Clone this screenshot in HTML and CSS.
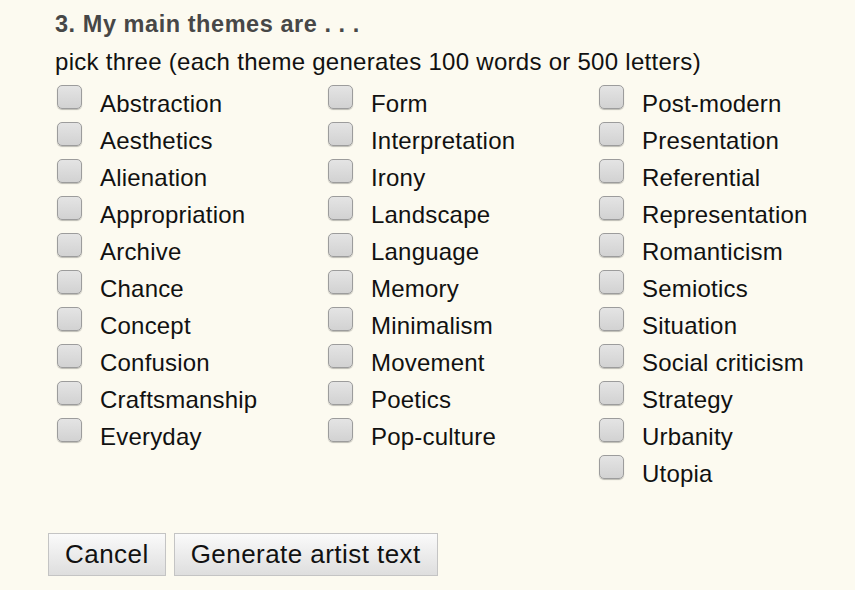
FILE: index.html
```html
<!DOCTYPE html>
<html>
<head>
<meta charset="utf-8">
<link rel="stylesheet" href="styles.css">
</head>
<body>
<div class="page">
  <h2 class="title">3. My main themes are . . .</h2>
  <p class="hint">pick three (each theme generates 100 words or 500 letters)</p>
  <div class="cols">
    <div class="col">
      <label class="item"><span class="box"></span><span>Abstraction</span></label>
      <label class="item"><span class="box"></span><span>Aesthetics</span></label>
      <label class="item"><span class="box"></span><span>Alienation</span></label>
      <label class="item"><span class="box"></span><span>Appropriation</span></label>
      <label class="item"><span class="box"></span><span>Archive</span></label>
      <label class="item"><span class="box"></span><span>Chance</span></label>
      <label class="item"><span class="box"></span><span>Concept</span></label>
      <label class="item"><span class="box"></span><span>Confusion</span></label>
      <label class="item"><span class="box"></span><span>Craftsmanship</span></label>
      <label class="item"><span class="box"></span><span>Everyday</span></label>
    </div>
    <div class="col">
      <label class="item"><span class="box"></span><span>Form</span></label>
      <label class="item"><span class="box"></span><span>Interpretation</span></label>
      <label class="item"><span class="box"></span><span>Irony</span></label>
      <label class="item"><span class="box"></span><span>Landscape</span></label>
      <label class="item"><span class="box"></span><span>Language</span></label>
      <label class="item"><span class="box"></span><span>Memory</span></label>
      <label class="item"><span class="box"></span><span>Minimalism</span></label>
      <label class="item"><span class="box"></span><span>Movement</span></label>
      <label class="item"><span class="box"></span><span>Poetics</span></label>
      <label class="item"><span class="box"></span><span>Pop-culture</span></label>
    </div>
    <div class="col">
      <label class="item"><span class="box"></span><span>Post-modern</span></label>
      <label class="item"><span class="box"></span><span>Presentation</span></label>
      <label class="item"><span class="box"></span><span>Referential</span></label>
      <label class="item"><span class="box"></span><span>Representation</span></label>
      <label class="item"><span class="box"></span><span>Romanticism</span></label>
      <label class="item"><span class="box"></span><span>Semiotics</span></label>
      <label class="item"><span class="box"></span><span>Situation</span></label>
      <label class="item"><span class="box"></span><span>Social criticism</span></label>
      <label class="item"><span class="box"></span><span>Strategy</span></label>
      <label class="item"><span class="box"></span><span>Urbanity</span></label>
      <label class="item"><span class="box"></span><span>Utopia</span></label>
    </div>
  </div>
  <div class="actions">
    <button class="btn">Cancel</button>
    <button class="btn">Generate artist text</button>
  </div>
</div>
</body>
</html>
```
FILE: styles.css
```css
html, body {
  margin: 0;
  padding: 0;
  background: #fcfaf0;
}
body {
  font-family: "Liberation Sans", Arial, sans-serif;
  color: #111;
}
.page {
  padding: 9px 0 0 55px;
}
.title {
  margin: 0;
  font-size: 23.5px;
  line-height: 30px;
  letter-spacing: 0.55px;
  font-weight: bold;
  color: #474747;
}
.hint {
  margin: 4px 0 0 0;
  font-size: 24px;
  line-height: 37px;
  letter-spacing: 0.28px;
}
.cols {
  display: flex;
  margin-left: 2px;
  margin-top: 5px;
}
.col {
  width: 271px;
  flex-shrink: 0;
  display: flex;
  flex-direction: column;
}
.item {
  display: flex;
  align-items: flex-start;
  height: 37px;
  font-size: 24px;
  line-height: 37px;
  letter-spacing: 0.2px;
}
.box {
  width: 23px;
  height: 22px;
  margin-right: 18px;
  border: 1px solid #9c9c9c;
  border-radius: 5px;
  background: linear-gradient(#e4e4e4, #d2d2d2);
  box-shadow: 0 1px 1px rgba(0,0,0,0.25);
  flex-shrink: 0;
}
.actions {
  display: flex;
  gap: 8px;
  margin-left: -7px;
  margin-top: 41px;
}
.btn {
  font-family: "Liberation Sans", Arial, sans-serif;
  font-size: 26px;
  letter-spacing: 0.45px;
  height: 43px;
  padding: 0 16px;
  color: #111;
  border: 1px solid #c4c4c4;
  border-radius: 0;
  background: linear-gradient(#fafafa, #dedede);
}
```
